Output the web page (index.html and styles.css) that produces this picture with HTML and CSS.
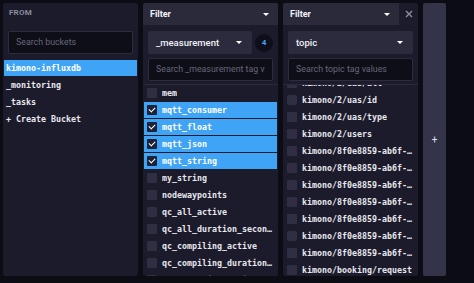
FILE: index.html
```html
<!DOCTYPE html>
<html lang="en">
<head>
    <meta charset="UTF-8">
    <title>Query Builder</title>
    <link rel="stylesheet" href="styles.css">
</head>
<body>
    <div class="builder">
        <section class="card">
            <div class="card-title">FROM</div>
            <div class="search search-bucket">
                <input type="text" placeholder="Search buckets">
            </div>
            <ul class="buckets">
                <li class="selected">kimono-influxdb</li>
                <li>_monitoring</li>
                <li>_tasks</li>
                <li>+ Create Bucket</li>
            </ul>
        </section>

        <section class="card">
            <div class="card-head">
                <div class="head-select">Filter <span class="caret"></span></div>
            </div>
            <div class="key-row">
                <div class="dropdown">_measurement <span class="caret"></span></div>
                <span class="count">4</span>
            </div>
            <div class="search">
                <input type="text" placeholder="Search _measurement tag values">
            </div>
            <div class="values">
                <ul>
                    <li><span class="box"></span><span class="label">mem</span></li>
                    <li class="selected"><span class="box"></span><span class="label">mqtt_consumer</span></li>
                    <li class="selected"><span class="box"></span><span class="label">mqtt_float</span></li>
                    <li class="selected"><span class="box"></span><span class="label">mqtt_json</span></li>
                    <li class="selected"><span class="box"></span><span class="label">mqtt_string</span></li>
                    <li><span class="box"></span><span class="label">my_string</span></li>
                    <li><span class="box"></span><span class="label">nodewaypoints</span></li>
                    <li><span class="box"></span><span class="label">qc_all_active</span></li>
                    <li><span class="box"></span><span class="label">qc_all_duration_seconds</span></li>
                    <li><span class="box"></span><span class="label">qc_compiling_active</span></li>
                    <li><span class="box"></span><span class="label">qc_compiling_duration_seconds</span></li>
                    <li><span class="box"></span><span class="label">qc_executing_active</span></li>
                </ul>
            </div>
        </section>

        <section class="card">
            <div class="card-head">
                <div class="head-select">Filter <span class="caret"></span></div>
                <span class="close">
                    <svg width="8" height="8" viewBox="0 0 8 8"><path d="M1 1L7 7M7 1L1 7" stroke="#8e8ea0" stroke-width="1.4" fill="none"/></svg>
                </span>
            </div>
            <div class="key-row">
                <div class="dropdown">topic <span class="caret"></span></div>
            </div>
            <div class="search">
                <input type="text" placeholder="Search topic tag values">
            </div>
            <div class="values">
                <ul class="scrolled">
                    <li><span class="box"></span><span class="label">kimono/2/uas/alt</span></li>
                    <li><span class="box"></span><span class="label">kimono/2/uas/id</span></li>
                    <li><span class="box"></span><span class="label">kimono/2/uas/type</span></li>
                    <li><span class="box"></span><span class="label">kimono/2/users</span></li>
                    <li><span class="box"></span><span class="label">kimono/8f0e8859-ab6f-4c1e-9a2b/alt</span></li>
                    <li><span class="box"></span><span class="label">kimono/8f0e8859-ab6f-4c1e-9a2b/id</span></li>
                    <li><span class="box"></span><span class="label">kimono/8f0e8859-ab6f-4c1e-9a2b/lat</span></li>
                    <li><span class="box"></span><span class="label">kimono/8f0e8859-ab6f-4c1e-9a2b/lon</span></li>
                    <li><span class="box"></span><span class="label">kimono/8f0e8859-ab6f-4c1e-9a2b/speed</span></li>
                    <li><span class="box"></span><span class="label">kimono/8f0e8859-ab6f-4c1e-9a2b/type</span></li>
                    <li><span class="box"></span><span class="label">kimono/8f0e8859-ab6f-4c1e-9a2b/user</span></li>
                    <li><span class="box"></span><span class="label">kimono/booking/request</span></li>
                </ul>
            </div>
        </section>

        <div class="add-col">+</div>
    </div>
</body>
</html>
```

FILE: styles.css
```css
body {
    margin: 0;
    background: #0c0c14;
    font-family: Roboto, 'Noto Sans', sans-serif;
    color: #f0f0f5;
    overflow: hidden;
}
.builder {
    display: flex;
    gap: 5px;
    padding: 3px;
    height: 274px;
}
.card {
    width: 135px;
    height: 273px;
    background: #1c1b2b;
    border-radius: 2px;
    display: flex;
    flex-direction: column;
    overflow: hidden;
}
.card-title {
    font-size: 8px;
    font-weight: bold;
    color: #8a8a9c;
    padding: 5px 6px 0;
    height: 15px;
    letter-spacing: 0.2px;
}
.search {
    margin: 3px 5px 0;
}
.search-bucket {
    margin-top: 7px;
}
.search input {
    box-sizing: border-box;
    width: 100%;
    height: 23px;
    margin: 0;
    background: #0e0e17;
    border: 1px solid #2c2c3d;
    border-radius: 2px;
    padding: 0 7px;
    font-family: Roboto, sans-serif;
    font-size: 8.8px;
    color: #ddd;
    outline: none;
}
.search input::placeholder {
    color: #66667a;
}
.buckets {
    list-style: none;
    margin: 6px 1px 0;
    padding: 0;
}
.buckets li,
.values li {
    height: 16px;
    margin-bottom: 1px;
    font-family: 'DejaVu Sans Mono', monospace;
    font-weight: bold;
    font-size: 8.3px;
    line-height: 16px;
    color: #e8e8ee;
    white-space: nowrap;
}
.buckets li {
    padding-left: 2px;
}
.buckets li.selected,
.values li.selected {
    background: #3fa4f5;
    color: #fff;
}
.card-head {
    display: flex;
    align-items: center;
    height: 22px;
    flex-shrink: 0;
}
.head-select {
    flex: 1;
    height: 100%;
    background: #2a2a3b;
    display: flex;
    align-items: center;
    justify-content: space-between;
    padding: 0 9px 0 7px;
    font-size: 9px;
    font-weight: bold;
}
.close {
    width: 19px;
    display: flex;
    justify-content: center;
    align-items: center;
}
.caret {
    width: 0;
    height: 0;
    border-left: 3px solid transparent;
    border-right: 3px solid transparent;
    border-top: 3px solid #fff;
}
.key-row {
    display: flex;
    align-items: center;
    gap: 3px;
    margin: 6px 5px 0;
}
.dropdown {
    flex: 1;
    height: 23px;
    background: #2c2b3e;
    border-radius: 2px;
    display: flex;
    align-items: center;
    justify-content: space-between;
    padding: 0 10px 0 8px;
    font-size: 9.5px;
    font-weight: 500;
}
.count {
    width: 18px;
    height: 18px;
    border-radius: 50%;
    background: #0f0f1b;
    color: #3fa4f5;
    font-size: 8px;
    font-weight: bold;
    display: flex;
    align-items: center;
    justify-content: center;
}
.values {
    flex: 1;
    margin-top: 3px;
    border-top: 1px solid #2a2a3a;
    overflow: hidden;
}
.values ul {
    list-style: none;
    margin: 0 1px;
    padding: 0;
}
.values ul.scrolled {
    margin-top: -10px;
}
.values li {
    display: flex;
    align-items: center;
    gap: 5px;
    padding: 0 3px;
}
.box {
    width: 10px;
    height: 10px;
    flex-shrink: 0;
    background: #2f2e42;
    border-radius: 1px;
}
.selected .box {
    background: #1d2238;
    position: relative;
}
.selected .box::after {
    content: '';
    position: absolute;
    left: 2px;
    top: 2px;
    width: 5px;
    height: 3px;
    border-left: 1.5px solid #fff;
    border-bottom: 1.5px solid #fff;
    transform: rotate(-45deg);
}
.label {
    overflow: hidden;
    text-overflow: ellipsis;
}
.add-col {
    width: 23px;
    height: 273px;
    background: #33334a;
    border-radius: 2px;
    display: flex;
    align-items: center;
    justify-content: center;
    font-size: 10px;
    color: #e0e0e8;
}
```
